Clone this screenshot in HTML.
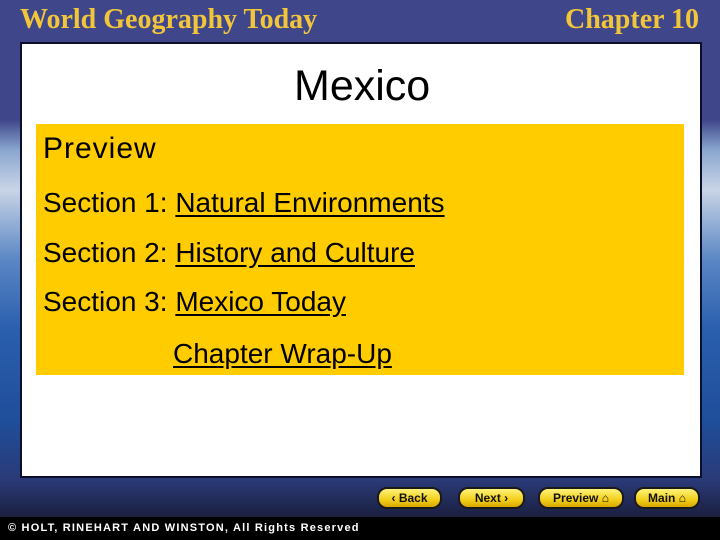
<!DOCTYPE html>
<html><head><style>
body{margin:0;width:720px;height:540px;overflow:hidden;position:relative;font-family:"Liberation Sans",Arial,sans-serif;
background:linear-gradient(180deg,#3f478a 0,#3f478a 120px,#8aa6cf 150px,#c8d4e6 190px,#5a86c4 260px,#2a5fae 330px,#1f4e9a 420px,#2a3a78 480px,#1b2040 516px);}
.hdr{position:absolute;top:4px;font-family:"Liberation Serif",serif;font-weight:bold;font-size:28px;color:#f3c63a;white-space:nowrap}
.panel{position:absolute;left:20px;top:42px;width:678px;height:432px;background:#fff;border:2px solid #0b0f2a}
.yb{position:absolute;left:36px;top:124px;width:648px;height:251px;background:#ffcc00}
.t{position:absolute;font-size:28px;line-height:1;color:#000;white-space:nowrap}
u{text-decoration:underline;text-underline-offset:3px}
.bar{position:absolute;left:0;top:517px;width:720px;height:23px;background:#000;color:#fff;font-size:11px;font-weight:bold;letter-spacing:1.2px;line-height:23px;padding-left:8px}
.btn{position:absolute;top:487px;height:18px;border-radius:10px;background:linear-gradient(#fff27a,#f2cf1a 60%,#d8a800);border:2px solid #1a1a1a;font-size:12px;font-weight:bold;text-align:center;line-height:18px;color:#111}
</style></head><body>
<div class="hdr" style="left:20px">World Geography Today</div>
<div class="hdr" style="left:565px">Chapter 10</div>
<div class="panel"></div>
<div class="t" style="left:294px;top:65px;font-size:43px">Mexico</div>
<div class="yb"></div>
<div class="t" style="left:43px;top:134px;font-size:30px;letter-spacing:1px">Preview</div>
<div class="t" style="left:43px;top:189px">Section 1: <u>Natural Environments</u></div>
<div class="t" style="left:43px;top:239px">Section 2: <u>History and Culture</u></div>
<div class="t" style="left:43px;top:288px">Section 3: <u>Mexico Today</u></div>
<div class="t" style="left:173px;top:340px"><u>Chapter Wrap-Up</u></div>
<div class="btn" style="left:377px;width:61px">&#8249; Back</div>
<div class="btn" style="left:458px;width:63px">Next &#8250;</div>
<div class="btn" style="left:538px;width:82px">Preview &#8962;</div>
<div class="btn" style="left:634px;width:62px">Main &#8962;</div>
<div class="bar">© HOLT, RINEHART AND WINSTON, All Rights Reserved</div>
</body></html>
